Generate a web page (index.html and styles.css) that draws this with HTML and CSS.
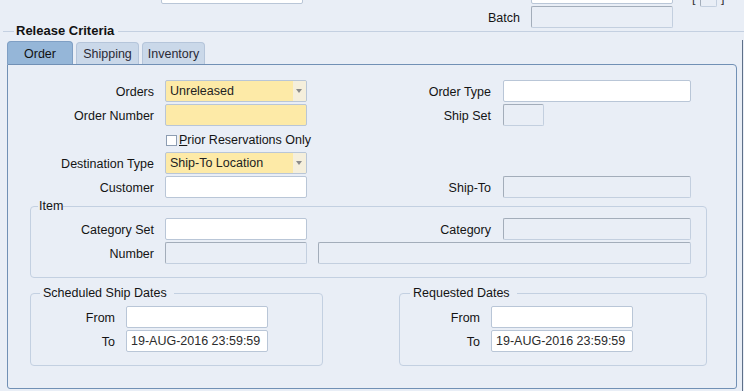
FILE: index.html
```html
<!DOCTYPE html>
<html>
<head>
<meta charset="utf-8">
<title>Release Criteria</title>
<link rel="stylesheet" href="styles.css">
</head>
<body>
<div class="page">
  <div class="top">
    <div class="toprow row-a">
      <div class="fld w142 white"></div>
      <div class="fld w142 white gap-a"></div>
      <span class="brk">[</span><div class="fld mini dis"></div><span class="brk brk-r">]</span>
    </div>
    <div class="toprow">
      <label class="lbl l-batch">Batch</label>
      <div class="fld w142 dis"></div>
    </div>
  </div>

  <div class="section-title"><span>Release Criteria</span></div>

  <div class="tabs">
    <div class="tab active">Order</div>
    <div class="tab">Shipping</div>
    <div class="tab">Inventory</div>
  </div>

  <div class="panel">
    <div class="form">
      <div class="row">
        <label class="lbl l-main">Orders</label>
        <div class="fld w142 req sel"><span class="val">Unreleased</span><span class="drop"><i class="arrow"></i></span></div>
        <label class="lbl l-right">Order Type</label>
        <div class="fld w188 white"></div>
      </div>
      <div class="row">
        <label class="lbl l-main">Order Number</label>
        <div class="fld w142 req"></div>
        <label class="lbl l-right">Ship Set</label>
        <div class="fld w41 dis"></div>
      </div>
      <div class="row">
        <span class="lbl l-main"></span>
        <label class="chk"><span class="box"></span><span><u>P</u>rior Reservations Only</span></label>
      </div>
      <div class="row">
        <label class="lbl l-main">Destination Type</label>
        <div class="fld w142 req sel"><span class="val">Ship-To Location</span><span class="drop"><i class="arrow"></i></span></div>
      </div>
      <div class="row">
        <label class="lbl l-main">Customer</label>
        <div class="fld w142 white"></div>
        <label class="lbl l-right">Ship-To</label>
        <div class="fld w188 dis"></div>
      </div>
    </div>

    <fieldset class="group item">
      <legend>Item</legend>
      <div class="row">
        <label class="lbl l-item">Category Set</label>
        <div class="fld w142 white"></div>
        <label class="lbl l-right">Category</label>
        <div class="fld w188 dis"></div>
      </div>
      <div class="row">
        <label class="lbl l-item">Number</label>
        <div class="fld w142 dis"></div>
        <div class="fld w373 dis"></div>
      </div>
    </fieldset>

    <div class="dates">
      <fieldset class="group sched">
        <legend>Scheduled Ship Dates</legend>
        <div class="row">
          <label class="lbl l-sched">From</label>
          <div class="fld w142 white"></div>
        </div>
        <div class="row">
          <label class="lbl l-sched">To</label>
          <div class="fld w142 white"><span class="val date">19-AUG-2016 23:59:59</span></div>
        </div>
      </fieldset>
      <fieldset class="group req-dates">
        <legend>Requested Dates</legend>
        <div class="row">
          <label class="lbl l-req">From</label>
          <div class="fld w142 white"></div>
        </div>
        <div class="row">
          <label class="lbl l-req">To</label>
          <div class="fld w142 white"><span class="val date">19-AUG-2016 23:59:59</span></div>
        </div>
      </fieldset>
    </div>
  </div>
</div>
</body>
</html>
```

FILE: styles.css
```css
* { box-sizing: border-box; }
html, body { margin: 0; padding: 0; }
body {
  background-color: #e9eef6;
  background-image: linear-gradient(to left, #e9eef6 1px, #5d6f88 1px, #5d6f88 2px, #e9eef6 2px);
  background-size: 100% 351px;
  background-position: 0 40px;
  background-repeat: no-repeat;
  font-family: "Liberation Sans", Arial, sans-serif;
  font-size: 12.5px;
  color: #141414;
  width: 744px;
  height: 391px;
  overflow: hidden;
}
.page { height: 391px; }

/* top (clipped) area */
.top { margin-top: -18px; }
.toprow { display: flex; align-items: center; height: 22px; }
.toprow + .toprow { margin-top: 2px; }
.row-a { padding-left: 161px; }
.gap-a { margin-left: 228px; }
.brk {
  align-self: flex-end;
  margin-left: 19px;
  margin-bottom: -1px;
  color: #333;
  width: 4px;
  line-height: 14px;
}
.brk-r { margin-left: 4px; }
.mini { width: 17px; height: 16px; margin-left: 4px; align-self: flex-end; margin-bottom: -3px; }
.l-batch { width: 531px; padding-right: 12px; }

/* section title */
.section-title {
  display: flex;
  align-items: center;
  margin-top: -4px;
  height: 14px;
  padding-left: 3px;
  font-weight: bold;
  font-size: 13px;
  color: #111;
}
.section-title::before {
  content: "";
  width: 11px;
  height: 1px;
  background: #c4d0e1;
}
.section-title span { margin: 0 4px 0 2px; line-height: 14px; }
.section-title::after {
  content: "";
  flex: 1;
  height: 1px;
  background: #c4d0e1;
}

/* tabs */
.tabs {
  display: flex;
  align-items: flex-end;
  margin: 3px 0 0 7px;
  height: 23px;
  gap: 3px;
}
.tab {
  width: 63px;
  height: 22px;
  background: #cad8e9;
  border: 1px solid #b5c5da;
  border-bottom: none;
  border-radius: 4px 4px 0 0;
  text-align: center;
  line-height: 23px;
  color: #2a2a35;
}
.tab.active {
  width: 66px;
  height: 23px;
  background: #95b6d8;
  border-color: #7f9fc4;
  line-height: 24px;
  color: #111;
}

/* panel */
.panel {
  margin-left: 7px;
  width: 730px;
  height: 325px;
  border: 1px solid #7190b5;
  border-radius: 0 4px 3px 3px;
  padding: 15px 0 0 0;
}
.row { display: flex; align-items: center; height: 22px; }
.row + .row { margin-top: 2px; }

.lbl {
  flex: none;
  text-align: right;
  padding-right: 11px;
  padding-top: 2px;
  line-height: 14px;
  white-space: nowrap;
}
.l-main { width: 157px; }
.l-right { width: 196px; padding-right: 12px; }
.l-item { width: 134px; }
.l-sched { width: 95px; }
.l-req { width: 91px; }

/* fields */
.fld {
  flex: none;
  height: 22px;
  border: 1px solid #b9c6d7;
  border-radius: 2px;
}
.white { background: #ffffff; }
.req { background: #fdeaa7; }
.dis {
  background: #e9eef6;
  border-color: #a3adba #c3cfdf #c3cfdf #a3adba;
}
.w142 { width: 142px; }
.w188 { width: 188px; }
.w41 { width: 41px; }
.w373 { width: 373px; margin-left: 11px; }

.sel { display: flex; align-items: stretch; }
.val {
  display: block;
  padding: 2px 0 0 4px;
  line-height: 17px;
  color: #222;
  white-space: nowrap;
}
.sel .val { flex: 1; }
.drop {
  width: 13px;
  background: #f5efdc;
  display: flex;
  align-items: center;
  justify-content: center;
  border-radius: 0 1px 1px 0;
}
.arrow {
  width: 0;
  height: 0;
  border-left: 3.5px solid transparent;
  border-right: 3.5px solid transparent;
  border-top: 4px solid #8b8b8b;
  margin-left: -1px;
}
.date { color: #2c2c2c; }

/* checkbox */
.chk { display: flex; align-items: center; margin-left: 1px; padding-top: 2px; }
.box {
  width: 11px;
  height: 11px;
  background: #fff;
  border: 1px solid #8d9db2;
  margin-right: 2px;
}
.chk u { text-decoration-thickness: 1px; }

/* groups */
.group {
  margin: 0;
  padding: 0;
  border: 1px solid #c3d0e1;
  border-radius: 4px;
  min-width: 0;
}
.group legend {
  line-height: 14px;
  padding: 0;
  color: #141414;
}
.item {
  margin: 1px 0 0 22px;
  width: 677px;
  padding: 5px 0 13px 0;
}
.item legend { margin-left: 7px; padding: 0 0 0 1px; }

.dates { display: flex; margin: 8px 0 0 22px; }
.sched { width: 293px; padding: 6px 0 13px 0; }
.sched legend { margin-left: 9px; padding: 0 7px 0 3px; }
.req-dates { width: 308px; margin-left: 76px; padding: 6px 0 13px 0; }
.req-dates legend { margin-left: 10px; padding: 0 7px 0 3px; }
```
